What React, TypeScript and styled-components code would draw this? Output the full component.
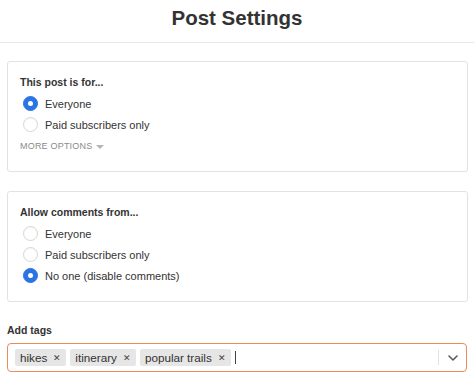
import styled, { createGlobalStyle } from "styled-components";

const GlobalStyle = createGlobalStyle`
  html, body {
    margin: 0;
    padding: 0;
    background: #ffffff;
  }
  body {
    font-family: "Liberation Sans", Arial, Helvetica, sans-serif;
    color: #333333;
  }
`;

const Page = styled.div`
  width: 474px;
  height: 381px;
  overflow: hidden;
`;

const Header = styled.header`
  height: 43px;
  box-sizing: border-box;
  padding-top: 6px;
  border-bottom: 1px solid #e8e8e8;
  text-align: center;
`;

const Title = styled.h1`
  margin: 0;
  font-size: 20.5px;
  line-height: 24px;
  font-weight: 700;
  color: #333333;
`;

const Body = styled.main`
  display: flex;
  flex-direction: column;
  padding: 18px 7px 0 7px;
`;

const Card = styled.section`
  border: 1px solid #e2e2e2;
  border-radius: 3px;
  padding: 12px 12px 15px;
  margin-bottom: 19px;
  width: 461px;
  box-sizing: border-box;
`;

const Legend = styled.div`
  font-size: 10.5px;
  line-height: 16px;
  font-weight: 700;
  color: #333333;
  margin-bottom: 3px;
`;

const RadioRow = styled.label`
  display: flex;
  align-items: center;
  height: 21px;
  gap: 7px;
  font-size: 11px;
  color: #333333;
  padding-left: 3px;
`;

const RadioDot = styled.span<{ $checked?: boolean }>`
  width: 15px;
  height: 15px;
  box-sizing: border-box;
  border-radius: 50%;
  flex-shrink: 0;
  display: flex;
  align-items: center;
  justify-content: center;
  background: ${(p) => (p.$checked ? "#2a74e4" : "#ffffff")};
  border: 1px solid ${(p) => (p.$checked ? "#2a74e4" : "#d6d6d6")};
  box-shadow: ${(p) => (p.$checked ? "none" : "inset 0 1px 1px rgba(0,0,0,0.04)")};

  &::after {
    content: "";
    display: ${(p) => (p.$checked ? "block" : "none")};
    width: 5px;
    height: 5px;
    border-radius: 50%;
    background: #ffffff;
  }
`;

const MoreOptions = styled.div`
  display: flex;
  align-items: center;
  gap: 4px;
  margin-top: 4px;
  margin-bottom: 3px;
  font-size: 9px;
  line-height: 14px;
  letter-spacing: 0.2px;
  color: #8a8a8a;
  text-transform: uppercase;
`;

const Caret = styled.span`
  width: 0;
  height: 0;
  border-left: 4px solid transparent;
  border-right: 4px solid transparent;
  border-top: 4px solid #b5b5b5;
  margin-top: 1px;
`;

const FieldLabel = styled.div`
  font-size: 10.5px;
  line-height: 16px;
  font-weight: 700;
  color: #333333;
  margin-top: 1px;
  margin-bottom: 5px;
`;

const TagInput = styled.div`
  display: flex;
  align-items: center;
  height: 29px;
  box-sizing: border-box;
  border: 1px solid #e98b5c;
  border-radius: 4px;
  padding-left: 7px;
  width: 460px;
`;

const TagList = styled.div`
  flex: 1;
  display: flex;
  align-items: center;
  gap: 4px;
`;

const Tag = styled.span`
  display: inline-flex;
  align-items: center;
  height: 17px;
  padding: 0 5px;
  gap: 6px;
  background: #e6e6e6;
  border-radius: 2px;
  font-size: 11.7px;
  color: #333333;
`;

const Remove = styled.span`
  font-size: 9px;
  color: #444444;
`;

const Cursor = styled.span`
  width: 1px;
  height: 13px;
  background: #444444;
`;

const Separator = styled.span`
  width: 1px;
  height: 15px;
  background: #e2e2e2;
`;

const Toggle = styled.span`
  width: 27px;
  display: flex;
  align-items: center;
  justify-content: center;
  color: #555555;
`;

const audience = [
  { label: "Everyone", checked: true },
  { label: "Paid subscribers only", checked: false },
];

const comments = [
  { label: "Everyone", checked: false },
  { label: "Paid subscribers only", checked: false },
  { label: "No one (disable comments)", checked: true },
];

const tags = ["hikes", "itinerary", "popular trails"];

export default function App() {
  return (
    <Page>
      <GlobalStyle />
      <Header>
        <Title>Post Settings</Title>
      </Header>
      <Body>
        <Card>
          <Legend>This post is for...</Legend>
          {audience.map((o) => (
            <RadioRow key={o.label}>
              <RadioDot $checked={o.checked} />
              {o.label}
            </RadioRow>
          ))}
          <MoreOptions>
            More options <Caret />
          </MoreOptions>
        </Card>
        <Card>
          <Legend>Allow comments from...</Legend>
          {comments.map((o) => (
            <RadioRow key={o.label}>
              <RadioDot $checked={o.checked} />
              {o.label}
            </RadioRow>
          ))}
        </Card>
        <FieldLabel>Add tags</FieldLabel>
        <TagInput>
          <TagList>
            {tags.map((t) => (
              <Tag key={t}>
                {t}
                <Remove>✕</Remove>
              </Tag>
            ))}
            <Cursor />
          </TagList>
          <Separator />
          <Toggle>
            <svg width="10" height="6" viewBox="0 0 10 6" fill="none">
              <path d="M1 1l4 4 4-4" stroke="#555" strokeWidth="1.5" strokeLinecap="round" strokeLinejoin="round" />
            </svg>
          </Toggle>
        </TagInput>
      </Body>
    </Page>
  );
}
